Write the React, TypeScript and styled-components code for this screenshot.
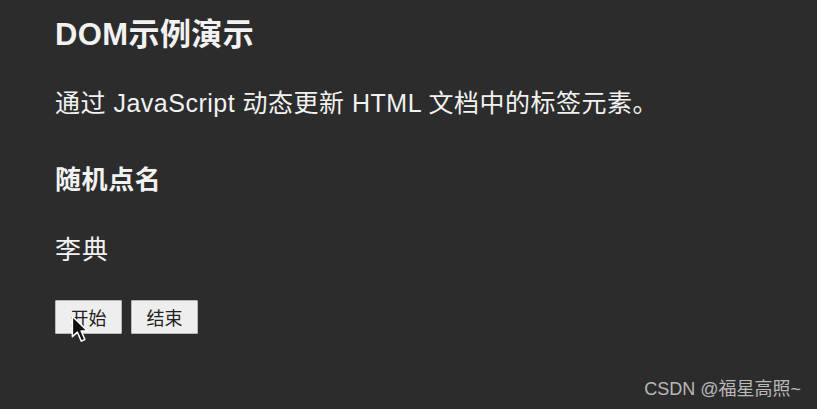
import React from 'react';
import styled, { createGlobalStyle } from 'styled-components';

const GlobalStyle = createGlobalStyle`
  html, body {
    margin: 0;
    padding: 0;
    background: #2c2c2c;
  }
  body {
    font-family: "Liberation Sans", "Noto Sans CJK SC", sans-serif;
    color: #f2f2f2;
  }
`;

export default function App(): JSX.Element {
  return (
    <>
      <GlobalStyle />
      <Page>
        <Title>DOM示例演示</Title>
        <Intro>通过 JavaScript 动态更新 HTML 文档中的标签元素。</Intro>
        <SubTitle>随机点名</SubTitle>
        <NameLine>李典</NameLine>
        <ButtonRow>
          <Button>开始</Button>
          <Button>结束</Button>
          <Cursor viewBox="0 0 14 22" aria-hidden="true">
            <path
              d="M1 1 L1 17 L5 13.5 L8 20.5 L10.8 19.3 L7.9 12.5 L12.8 12.5 Z"
              fill="#111"
              stroke="#fff"
              strokeWidth="1.2"
              strokeLinejoin="round"
            />
          </Cursor>
        </ButtonRow>
        <Watermark>CSDN @福星高照~</Watermark>
      </Page>
    </>
  );
}

const Page = styled.div`
  position: relative;
  height: 409px;
  box-sizing: border-box;
  padding: 17px 0 0 55px;
  overflow: hidden;
`;

const Title = styled.h1`
  margin: 0;
  font-size: 31px;
  line-height: 36px;
  font-weight: 700;
  letter-spacing: 0.4px;
`;

const Intro = styled.p`
  margin: 35px 0 0;
  font-size: 25px;
  line-height: 30px;
  letter-spacing: 0.5px;
`;

const SubTitle = styled.h3`
  margin: 47px 0 0;
  font-size: 26px;
  line-height: 30px;
  font-weight: 700;
  letter-spacing: 0.6px;
`;

const NameLine = styled.div`
  margin-top: 40px;
  font-size: 26px;
  line-height: 30px;
  letter-spacing: 1px;
`;

const ButtonRow = styled.div`
  position: relative;
  display: flex;
  gap: 9px;
  margin-top: 35px;
`;

const Button = styled.button`
  width: 67px;
  height: 34px;
  padding: 0;
  background: #eeeeee;
  border: 1px solid #b9b9b9;
  border-radius: 1px;
  color: #222;
  font-family: "Liberation Sans", "Noto Sans CJK SC", sans-serif;
  font-size: 18px;
`;

const Cursor = styled.svg`
  position: absolute;
  left: 16px;
  top: 15px;
  width: 18px;
  height: 28px;
`;

const Watermark = styled.div`
  position: absolute;
  right: 16px;
  bottom: 9px;
  font-family: "Liberation Sans", "Noto Sans CJK SC", sans-serif;
  font-size: 18px;
  color: #b8b8b8;
`;
